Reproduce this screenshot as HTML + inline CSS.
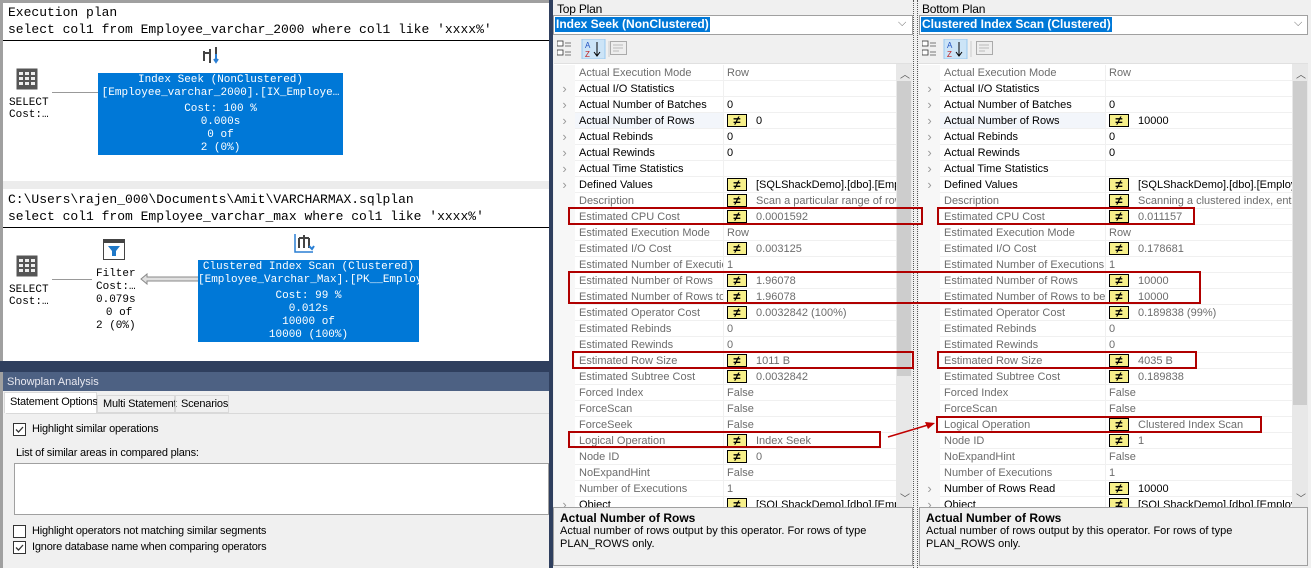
<!DOCTYPE html>
<html><head><meta charset="utf-8">
<style>
*{margin:0;padding:0;box-sizing:border-box}
body{width:1311px;height:568px;overflow:hidden;background:#a0a0a0;position:relative;font-family:"Liberation Sans",sans-serif;font-size:11px}
.a{position:absolute}
.mono{font-family:"Liberation Mono",monospace;font-size:13px;color:#000;white-space:pre}
.blue{background:#0078d7;color:#fff;text-align:center;font-family:"Liberation Mono",monospace;font-size:11px;white-space:pre;overflow:hidden}
.blue div{height:13px;line-height:13px}
.sm{font-family:"Liberation Mono",monospace;font-size:11px;white-space:pre;line-height:12px}
.grid{position:absolute;background:#fff;overflow:hidden}
.row{height:16px;display:flex;line-height:16px;white-space:nowrap;font-size:11px}
.row .g{background:#f7f7f7;color:#999;text-align:center;font-size:13px;flex:none}
.row .n{border-bottom:1px solid #f0f0f0;border-right:1px solid #f0f0f0;padding-left:4px;overflow:hidden;flex:none;color:#6d6d6d}
.row .v{border-bottom:1px solid #f0f0f0;padding-left:3px;overflow:hidden;flex:1;color:#6d6d6d}
.row.b .n,.row.b .v{color:#000}
.ne{display:inline-block;width:20px;height:13px;background:#f7f08a;border:1px solid #000;vertical-align:top;margin-top:1px;text-align:center;line-height:11px;font-size:13px;font-weight:bold;color:#000;margin-right:9px}
.red{position:absolute;border:2px solid #b00000}
.tb{position:absolute;font-size:11px;letter-spacing:-0.2px;white-space:nowrap}
</style></head><body>

<!-- LEFT PANEL -->
<div class="a" style="left:3px;top:3px;width:546px;height:178px;background:#fff"></div>
<div class="a mono" style="left:8px;top:5px">Execution plan</div>
<div class="a mono" style="left:8px;top:22px">select col1 from Employee_varchar_2000 where col1 like 'xxxx%'</div>
<div class="a" style="left:3px;top:40px;width:546px;height:1px;background:#000"></div>
<div class="a" style="left:3px;top:181px;width:546px;height:8px;background:#ececec"></div>
<div class="a" style="left:3px;top:189px;width:546px;height:172px;background:#fff"></div>
<div class="a mono" style="left:8px;top:192px">C:\Users\rajen_000\Documents\Amit\VARCHARMAX.sqlplan</div>
<div class="a mono" style="left:8px;top:209px">select col1 from Employee_varchar_max where col1 like 'xxxx%'</div>
<div class="a" style="left:3px;top:227px;width:546px;height:1px;background:#000"></div>

<svg class="a" style="left:16px;top:68px" width="22" height="22"><rect x="0.5" y="0.5" width="21" height="21" fill="#555"/><g fill="#eee"><rect x="3" y="4" width="4" height="3"/><rect x="9" y="4" width="4" height="3"/><rect x="15" y="4" width="4" height="3"/><rect x="3" y="9" width="4" height="3"/><rect x="9" y="9" width="4" height="3"/><rect x="15" y="9" width="4" height="3"/><rect x="3" y="14" width="4" height="3"/><rect x="9" y="14" width="4" height="3"/><rect x="15" y="14" width="4" height="3"/></g></svg>
<div class="a sm" style="left:9px;top:97px">SELECT
Cost:…</div>
<div class="a" style="left:52px;top:92px;width:46px;height:1px;background:#999"></div>
<svg class="a" style="left:200px;top:45px" width="20" height="22"><path d="M4 6v10M10 4v14M4 8h6M16 2v8" stroke="#444" stroke-width="2" fill="none"/><path d="M14 14l2 3 2-3" stroke="#2a7fd4" stroke-width="2" fill="none"/><path d="M16 9v8" stroke="#2a7fd4" stroke-width="2"/></svg>
<div class="a blue" style="left:98px;top:73px;width:245px;height:82px;padding-top:1px"><div>Index Seek (NonClustered)</div><div>[Employee_varchar_2000].[IX_Employe…</div><div style="margin-top:3px">Cost: 100 %</div><div>0.000s</div><div>0 of</div><div>2 (0%)</div></div>

<svg class="a" style="left:16px;top:255px" width="22" height="22"><rect x="0.5" y="0.5" width="21" height="21" fill="#555"/><g fill="#eee"><rect x="3" y="4" width="4" height="3"/><rect x="9" y="4" width="4" height="3"/><rect x="15" y="4" width="4" height="3"/><rect x="3" y="9" width="4" height="3"/><rect x="9" y="9" width="4" height="3"/><rect x="15" y="9" width="4" height="3"/><rect x="3" y="14" width="4" height="3"/><rect x="9" y="14" width="4" height="3"/><rect x="15" y="14" width="4" height="3"/></g></svg>
<div class="a sm" style="left:9px;top:284px">SELECT
Cost:…</div>
<div class="a" style="left:52px;top:279px;width:40px;height:1px;background:#999"></div>
<svg class="a" style="left:103px;top:239px" width="23" height="22"><rect x="0.5" y="0.5" width="21" height="20" fill="#fff" stroke="#444"/><rect x="1" y="1" width="20" height="3" fill="#444"/><path d="M5 7h12l-4 5v5h-4v-5z" fill="#1e78c8"/></svg>
<div class="a sm" style="left:96px;top:268px;text-align:center;line-height:13px">Filter
Cost:…
0.079s
 0 of
2 (0%)</div>
<svg class="a" style="left:140px;top:273px" width="60" height="12"><path d="M1 6l6-5v3h52v4H7v3z" fill="#e0e0e0" stroke="#888"/></svg>
<svg class="a" style="left:292px;top:232px" width="24" height="24"><path d="M7 6v10M12 3v13M17 6v10M7 6h10" stroke="#444" stroke-width="2" fill="none"/><path d="M3 2v18h18" stroke="#2a7fd4" stroke-width="1.5" fill="none"/><path d="M17 14l3 3 2-3" stroke="#2a7fd4" stroke-width="2" fill="none"/></svg>
<div class="a blue" style="left:198px;top:260px;width:221px;height:82px;padding-top:1px"><div>Clustered Index Scan (Clustered)</div><div>[Employee_Varchar_Max].[PK__Employe…</div><div style="margin-top:3px">Cost: 99 %</div><div>0.012s</div><div>10000 of</div><div>10000 (100%)</div></div>

<div class="a" style="left:0;top:361px;width:552px;height:11px;background:#2f3f5e"></div>
<div class="a" style="left:3px;top:372px;width:546px;height:19px;background:#4d6183;color:#e8e8f0;padding:3px 4px;font-size:11px;line-height:14px">Showplan Analysis</div>
<div class="a" style="left:3px;top:391px;width:546px;height:177px;background:#f0f0f0"></div>
<div class="tb" style="left:4px;top:392px;width:93px;height:21px;background:#fff;border:1px solid #d9d9d9;border-bottom:none;padding:3px 5px">Statement Options</div>
<div class="tb" style="left:97px;top:395px;width:78px;height:18px;border:1px solid #d9d9d9;padding:2px 5px">Multi Statement</div>
<div class="tb" style="left:175px;top:395px;width:54px;height:18px;border:1px solid #d9d9d9;padding:2px 5px">Scenarios</div>
<div class="a" style="left:6px;top:413px;width:543px;height:1px;background:#d9d9d9"></div>
<svg class="a" style="left:13px;top:423px" width="13" height="13"><rect x="0.5" y="0.5" width="12" height="12" fill="#fff" stroke="#333"/><path d="M3 6.5l2.5 2.5 4.5-5" stroke="#333" stroke-width="1.3" fill="none"/></svg>
<div class="tb" style="left:32px;top:423px">Highlight similar operations</div>
<div class="tb" style="left:16px;top:447px">List of similar areas in compared plans:</div>
<div class="a" style="left:14px;top:463px;width:535px;height:52px;background:#fff;border:1px solid #a0a0a0"></div>
<svg class="a" style="left:13px;top:525px" width="13" height="13"><rect x="0.5" y="0.5" width="12" height="12" fill="#fff" stroke="#333"/></svg>
<div class="tb" style="left:32px;top:525px">Highlight operators not matching similar segments</div>
<svg class="a" style="left:13px;top:541px" width="13" height="13"><rect x="0.5" y="0.5" width="12" height="12" fill="#fff" stroke="#333"/><path d="M3 6.5l2.5 2.5 4.5-5" stroke="#333" stroke-width="1.3" fill="none"/></svg>
<div class="tb" style="left:32px;top:541px">Ignore database name when comparing operators</div>
<div class="a" style="left:549px;top:0;width:4px;height:568px;background:#2f3f5e"></div>

<!-- RIGHT PANELS -->
<div class="a" style="left:553px;top:0;width:758px;height:568px;background:#f0f0f0"></div>
<div class="a" style="left:913px;top:0;width:5px;height:568px;border-left:1px dotted #555;border-right:1px dotted #555;background:#f0f0f0"></div>

<div class="tb" style="left:557px;top:2px;font-size:12px">Top Plan</div>
<div class="a" style="left:553px;top:15px;width:360px;height:20px;background:#fff;border:1px solid #a0a0a0"></div>
<div class="a" style="left:555px;top:17px;background:#0078d7;color:#fff;font-weight:bold;font-size:12px;padding:0 1px;line-height:15px">Index Seek (NonClustered)</div>
<div class="a" style="left:898px;top:17px;color:#666;font-size:11px">⌵</div>
<svg class="a" style="left:557px;top:39px" width="60" height="20"><rect x="0" y="2" width="6" height="5" fill="#fff" stroke="#333" stroke-width=".8"/><rect x="0" y="11" width="6" height="5" fill="#fff" stroke="#333" stroke-width=".8"/><path d="M8 4h6M8 7h6M8 13h6M8 16h6" stroke="#777"/><rect x="25" y="0" width="23" height="20" fill="#cce4f7" stroke="#99c9ef"/><text x="28" y="9" font-size="8" fill="#2050c0" font-family="Liberation Sans">A</text><text x="28" y="18" font-size="8" fill="#c02020" font-family="Liberation Sans">Z</text><path d="M40 3v13M37 13l3 4 3-4" stroke="#000" fill="none"/><path d="M52 2v16" stroke="#ccc"/></svg>
<svg class="a" style="left:610px;top:41px" width="18" height="15"><rect x="0.5" y="0.5" width="16" height="13" fill="#eee" stroke="#aaa"/><path d="M3 4h10M3 7h10M3 10h6" stroke="#bbb"/></svg>

<div class="grid" style="left:554px;top:63px;width:358px;height:444px;border-top:1px solid #e0e0e0">
<div style="position:absolute;left:342px;top:0;width:16px;height:444px;background:#e8e8e8"></div>
<div style="position:absolute;left:343px;top:17px;width:14px;height:295px;background:#cdcdcd"></div>
<div style="position:absolute;left:346px;top:2px;font-size:10px;color:#555">︿</div>
<div style="position:absolute;left:346px;top:426px;font-size:10px;color:#555">﹀</div>
<div style="position:absolute;left:0;top:1px;width:342px">
<div class="row"><div class="g" style="width:21px"></div><div class="n" style="width:149px">Actual Execution Mode</div><div class="v">Row</div></div>
<div class="row b"><div class="g" style="width:21px">›</div><div class="n" style="width:149px">Actual I/O Statistics</div><div class="v"></div></div>
<div class="row b"><div class="g" style="width:21px">›</div><div class="n" style="width:149px">Actual Number of Batches</div><div class="v">0</div></div>
<div class="row b"><div class="g" style="width:21px">›</div><div class="n" style="width:149px;background:#f3f6fb">Actual Number of Rows</div><div class="v"><span class="ne">≠</span>0</div></div>
<div class="row b"><div class="g" style="width:21px">›</div><div class="n" style="width:149px">Actual Rebinds</div><div class="v">0</div></div>
<div class="row b"><div class="g" style="width:21px">›</div><div class="n" style="width:149px">Actual Rewinds</div><div class="v">0</div></div>
<div class="row b"><div class="g" style="width:21px">›</div><div class="n" style="width:149px">Actual Time Statistics</div><div class="v"></div></div>
<div class="row b"><div class="g" style="width:21px">›</div><div class="n" style="width:149px">Defined Values</div><div class="v"><span class="ne">≠</span>[SQLShackDemo].[dbo].[Empl</div></div>
<div class="row"><div class="g" style="width:21px"></div><div class="n" style="width:149px">Description</div><div class="v"><span class="ne">≠</span>Scan a particular range of row</div></div>
<div class="row"><div class="g" style="width:21px"></div><div class="n" style="width:149px">Estimated CPU Cost</div><div class="v"><span class="ne">≠</span>0.0001592</div></div>
<div class="row"><div class="g" style="width:21px"></div><div class="n" style="width:149px">Estimated Execution Mode</div><div class="v">Row</div></div>
<div class="row"><div class="g" style="width:21px"></div><div class="n" style="width:149px">Estimated I/O Cost</div><div class="v"><span class="ne">≠</span>0.003125</div></div>
<div class="row"><div class="g" style="width:21px"></div><div class="n" style="width:149px">Estimated Number of Executio</div><div class="v">1</div></div>
<div class="row"><div class="g" style="width:21px"></div><div class="n" style="width:149px">Estimated Number of Rows</div><div class="v"><span class="ne">≠</span>1.96078</div></div>
<div class="row"><div class="g" style="width:21px"></div><div class="n" style="width:149px">Estimated Number of Rows to</div><div class="v"><span class="ne">≠</span>1.96078</div></div>
<div class="row"><div class="g" style="width:21px"></div><div class="n" style="width:149px">Estimated Operator Cost</div><div class="v"><span class="ne">≠</span>0.0032842 (100%)</div></div>
<div class="row"><div class="g" style="width:21px"></div><div class="n" style="width:149px">Estimated Rebinds</div><div class="v">0</div></div>
<div class="row"><div class="g" style="width:21px"></div><div class="n" style="width:149px">Estimated Rewinds</div><div class="v">0</div></div>
<div class="row"><div class="g" style="width:21px"></div><div class="n" style="width:149px">Estimated Row Size</div><div class="v"><span class="ne">≠</span>1011 B</div></div>
<div class="row"><div class="g" style="width:21px"></div><div class="n" style="width:149px">Estimated Subtree Cost</div><div class="v"><span class="ne">≠</span>0.0032842</div></div>
<div class="row"><div class="g" style="width:21px"></div><div class="n" style="width:149px">Forced Index</div><div class="v">False</div></div>
<div class="row"><div class="g" style="width:21px"></div><div class="n" style="width:149px">ForceScan</div><div class="v">False</div></div>
<div class="row"><div class="g" style="width:21px"></div><div class="n" style="width:149px">ForceSeek</div><div class="v">False</div></div>
<div class="row"><div class="g" style="width:21px"></div><div class="n" style="width:149px">Logical Operation</div><div class="v"><span class="ne">≠</span>Index Seek</div></div>
<div class="row"><div class="g" style="width:21px"></div><div class="n" style="width:149px">Node ID</div><div class="v"><span class="ne">≠</span>0</div></div>
<div class="row"><div class="g" style="width:21px"></div><div class="n" style="width:149px">NoExpandHint</div><div class="v">False</div></div>
<div class="row"><div class="g" style="width:21px"></div><div class="n" style="width:149px">Number of Executions</div><div class="v">1</div></div>
<div class="row b"><div class="g" style="width:21px">›</div><div class="n" style="width:149px">Object</div><div class="v"><span class="ne">≠</span>[SQLShackDemo].[dbo].[Empl</div></div>
</div></div>
<div class="a" style="left:553px;top:507px;width:360px;height:59px;background:#f0f0f0;border:1px solid #a0a0a0;padding:4px 6px;line-height:13px;font-size:11px">
<div style="font-weight:bold;font-size:12px">Actual Number of Rows</div>
<div>Actual number of rows output by this operator. For rows of type PLAN_ROWS only.</div></div>

<div class="tb" style="left:922px;top:2px;font-size:12px">Bottom Plan</div>
<div class="a" style="left:919px;top:15px;width:389px;height:20px;background:#fff;border:1px solid #a0a0a0"></div>
<div class="a" style="left:921px;top:17px;background:#0078d7;color:#fff;font-weight:bold;font-size:12px;padding:0 1px;line-height:15px">Clustered Index Scan (Clustered)</div>
<div class="a" style="left:1294px;top:17px;color:#666;font-size:11px">⌵</div>
<svg class="a" style="left:922px;top:39px" width="60" height="20"><rect x="0" y="2" width="6" height="5" fill="#fff" stroke="#333" stroke-width=".8"/><rect x="0" y="11" width="6" height="5" fill="#fff" stroke="#333" stroke-width=".8"/><path d="M8 4h6M8 7h6M8 13h6M8 16h6" stroke="#777"/><rect x="22" y="0" width="23" height="20" fill="#cce4f7" stroke="#99c9ef"/><text x="25" y="9" font-size="8" fill="#2050c0" font-family="Liberation Sans">A</text><text x="25" y="18" font-size="8" fill="#c02020" font-family="Liberation Sans">Z</text><path d="M37 3v13M34 13l3 4 3-4" stroke="#000" fill="none"/><path d="M49 2v16" stroke="#ccc"/></svg>
<svg class="a" style="left:976px;top:41px" width="18" height="15"><rect x="0.5" y="0.5" width="16" height="13" fill="#eee" stroke="#aaa"/><path d="M3 4h10M3 7h10M3 10h6" stroke="#bbb"/></svg>

<div class="grid" style="left:919px;top:63px;width:389px;height:444px;border-top:1px solid #e0e0e0">
<div style="position:absolute;left:373px;top:0;width:16px;height:444px;background:#e8e8e8"></div>
<div style="position:absolute;left:374px;top:17px;width:14px;height:324px;background:#cdcdcd"></div>
<div style="position:absolute;left:377px;top:2px;font-size:10px;color:#555">︿</div>
<div style="position:absolute;left:377px;top:426px;font-size:10px;color:#555">﹀</div>
<div style="position:absolute;left:0;top:1px;width:373px">
<div class="row"><div class="g" style="width:21px"></div><div class="n" style="width:166px">Actual Execution Mode</div><div class="v">Row</div></div>
<div class="row b"><div class="g" style="width:21px">›</div><div class="n" style="width:166px">Actual I/O Statistics</div><div class="v"></div></div>
<div class="row b"><div class="g" style="width:21px">›</div><div class="n" style="width:166px">Actual Number of Batches</div><div class="v">0</div></div>
<div class="row b"><div class="g" style="width:21px">›</div><div class="n" style="width:166px;background:#f3f6fb">Actual Number of Rows</div><div class="v"><span class="ne">≠</span>10000</div></div>
<div class="row b"><div class="g" style="width:21px">›</div><div class="n" style="width:166px">Actual Rebinds</div><div class="v">0</div></div>
<div class="row b"><div class="g" style="width:21px">›</div><div class="n" style="width:166px">Actual Rewinds</div><div class="v">0</div></div>
<div class="row b"><div class="g" style="width:21px">›</div><div class="n" style="width:166px">Actual Time Statistics</div><div class="v"></div></div>
<div class="row b"><div class="g" style="width:21px">›</div><div class="n" style="width:166px">Defined Values</div><div class="v"><span class="ne">≠</span>[SQLShackDemo].[dbo].[Employe</div></div>
<div class="row"><div class="g" style="width:21px"></div><div class="n" style="width:166px">Description</div><div class="v"><span class="ne">≠</span>Scanning a clustered index, entire</div></div>
<div class="row"><div class="g" style="width:21px"></div><div class="n" style="width:166px">Estimated CPU Cost</div><div class="v"><span class="ne">≠</span>0.011157</div></div>
<div class="row"><div class="g" style="width:21px"></div><div class="n" style="width:166px">Estimated Execution Mode</div><div class="v">Row</div></div>
<div class="row"><div class="g" style="width:21px"></div><div class="n" style="width:166px">Estimated I/O Cost</div><div class="v"><span class="ne">≠</span>0.178681</div></div>
<div class="row"><div class="g" style="width:21px"></div><div class="n" style="width:166px">Estimated Number of Executions</div><div class="v">1</div></div>
<div class="row"><div class="g" style="width:21px"></div><div class="n" style="width:166px">Estimated Number of Rows</div><div class="v"><span class="ne">≠</span>10000</div></div>
<div class="row"><div class="g" style="width:21px"></div><div class="n" style="width:166px">Estimated Number of Rows to be</div><div class="v"><span class="ne">≠</span>10000</div></div>
<div class="row"><div class="g" style="width:21px"></div><div class="n" style="width:166px">Estimated Operator Cost</div><div class="v"><span class="ne">≠</span>0.189838 (99%)</div></div>
<div class="row"><div class="g" style="width:21px"></div><div class="n" style="width:166px">Estimated Rebinds</div><div class="v">0</div></div>
<div class="row"><div class="g" style="width:21px"></div><div class="n" style="width:166px">Estimated Rewinds</div><div class="v">0</div></div>
<div class="row"><div class="g" style="width:21px"></div><div class="n" style="width:166px">Estimated Row Size</div><div class="v"><span class="ne">≠</span>4035 B</div></div>
<div class="row"><div class="g" style="width:21px"></div><div class="n" style="width:166px">Estimated Subtree Cost</div><div class="v"><span class="ne">≠</span>0.189838</div></div>
<div class="row"><div class="g" style="width:21px"></div><div class="n" style="width:166px">Forced Index</div><div class="v">False</div></div>
<div class="row"><div class="g" style="width:21px"></div><div class="n" style="width:166px">ForceScan</div><div class="v">False</div></div>
<div class="row"><div class="g" style="width:21px"></div><div class="n" style="width:166px">Logical Operation</div><div class="v"><span class="ne">≠</span>Clustered Index Scan</div></div>
<div class="row"><div class="g" style="width:21px"></div><div class="n" style="width:166px">Node ID</div><div class="v"><span class="ne">≠</span>1</div></div>
<div class="row"><div class="g" style="width:21px"></div><div class="n" style="width:166px">NoExpandHint</div><div class="v">False</div></div>
<div class="row"><div class="g" style="width:21px"></div><div class="n" style="width:166px">Number of Executions</div><div class="v">1</div></div>
<div class="row b"><div class="g" style="width:21px">›</div><div class="n" style="width:166px">Number of Rows Read</div><div class="v"><span class="ne">≠</span>10000</div></div>
<div class="row b"><div class="g" style="width:21px">›</div><div class="n" style="width:166px">Object</div><div class="v"><span class="ne">≠</span>[SQLShackDemo].[dbo].[Employe</div></div>
</div></div>
<div class="a" style="left:919px;top:507px;width:389px;height:59px;background:#f0f0f0;border:1px solid #a0a0a0;padding:4px 6px;line-height:13px;font-size:11px">
<div style="font-weight:bold;font-size:12px">Actual Number of Rows</div>
<div>Actual number of rows output by this operator. For rows of type PLAN_ROWS only.</div></div>

<div class="red" style="left:568px;top:207px;width:355px;height:18px"></div>
<div class="red" style="left:937px;top:207px;width:258px;height:18px"></div>
<div class="red" style="left:568px;top:271px;width:633px;height:33px"></div>
<div class="red" style="left:572px;top:351px;width:342px;height:18px"></div>
<div class="red" style="left:937px;top:351px;width:260px;height:18px"></div>
<div class="red" style="left:568px;top:431px;width:313px;height:17px"></div>
<div class="red" style="left:936px;top:416px;width:326px;height:17px"></div>
<svg class="a" style="left:886px;top:418px" width="52" height="22"><path d="M2 19L42 7" stroke="#c00000" stroke-width="1.5"/><path d="M49 5l-10 -1 3 7z" fill="#c00000"/></svg>

</body></html>
